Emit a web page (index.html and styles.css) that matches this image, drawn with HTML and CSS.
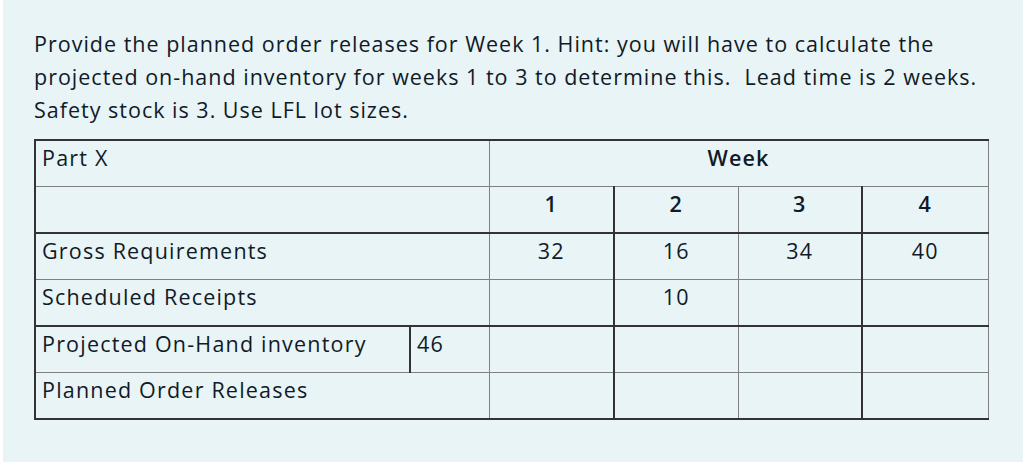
FILE: index.html
```html
<!DOCTYPE html>
<html>
<head>
<meta charset="utf-8">
<link rel="stylesheet" href="styles.css">
</head>
<body>
<div class="page">
  <p class="intro">Provide the planned order releases for Week 1. Hint: you will have to calculate the projected on-hand inventory for weeks 1 to 3 to determine this.&nbsp; Lead time is 2 weeks. Safety stock is 3. Use LFL lot sizes.</p>
  <table class="mrp">
    <colgroup>
      <col class="c-label">
      <col class="c-init">
      <col class="c-w1">
      <col class="c-w2">
      <col class="c-w3">
      <col class="c-w4">
    </colgroup>
    <tr class="r-head">
      <td colspan="2" class="lab">Part X</td>
      <td colspan="4" class="week">Week</td>
    </tr>
    <tr class="r-weeks">
      <td colspan="2"></td>
      <td class="num bold">1</td>
      <td class="num bold dl">2</td>
      <td class="num bold">3</td>
      <td class="num bold dl">4</td>
    </tr>
    <tr class="r-dark">
      <td colspan="2" class="lab">Gross Requirements</td>
      <td class="num">32</td>
      <td class="num dl">16</td>
      <td class="num">34</td>
      <td class="num dl">40</td>
    </tr>
    <tr class="r-tall">
      <td colspan="2" class="lab">Scheduled Receipts</td>
      <td class="num"></td>
      <td class="num dl">10</td>
      <td class="num"></td>
      <td class="num dl"></td>
    </tr>
    <tr class="r-dark">
      <td class="lab dr">Projected On-Hand inventory</td>
      <td class="lab">46</td>
      <td class="num"></td>
      <td class="num dl"></td>
      <td class="num"></td>
      <td class="num dl"></td>
    </tr>
    <tr class="r-last">
      <td colspan="2" class="lab">Planned Order Releases</td>
      <td class="num"></td>
      <td class="num dl"></td>
      <td class="num"></td>
      <td class="num dl"></td>
    </tr>
  </table>
</div>
</body>
</html>
```

FILE: styles.css
```css
html, body {
  margin: 0;
  padding: 0;
  background: #ffffff;
}
.page {
  margin-left: 3px;
  min-height: 462px;
  box-sizing: border-box;
  background: #e8f4f6;
  padding: 27px 0 0 31px;
  font-family: "Open Sans", "DejaVu Sans", sans-serif;
  color: #111a27;
}
.intro {
  margin: 0 0 13px 0;
  width: 975px;
  font-size: 21.5px;
  letter-spacing: 1px;
  line-height: 33px;
}
.mrp {
  border-collapse: collapse;
  width: 954px;
  table-layout: fixed;
  font-size: 21.5px;
  letter-spacing: 1.2px;
  border-top: 2px solid #333333;
  border-left: 2px solid #333333;
  border-bottom: 2px solid #333333;
  border-right: 1px solid #808080;
}
.c-label { width: 375px; }
.c-init { width: 79px; }
.c-w1 { width: 125px; }
.c-w2 { width: 124px; }
.c-w3 { width: 124px; }
.c-w4 { width: 126px; }
.mrp td {
  border: 1px solid #808080;
  height: 46px;
  box-sizing: border-box;
  padding: 2px 6px;
  vertical-align: top;
  line-height: 30px;
}
.mrp tr.r-weeks td,
.mrp tr.r-tall td,
.mrp tr.r-last td { height: 47px; }
.mrp td.num { text-align: center; }
.mrp td.week { text-align: center; font-weight: 600; }
.mrp td.bold { font-weight: 600; }
.mrp td.dl { border-left: 2px solid #333333; }
.mrp td.dr { border-right: 2px solid #333333; }
.mrp tr.r-dark td { border-top: 2px solid #333333; }
.mrp tr.r-head td { border-top: 2px solid #333333; }
.mrp tr.r-last td { border-bottom: 2px solid #333333; }
```
